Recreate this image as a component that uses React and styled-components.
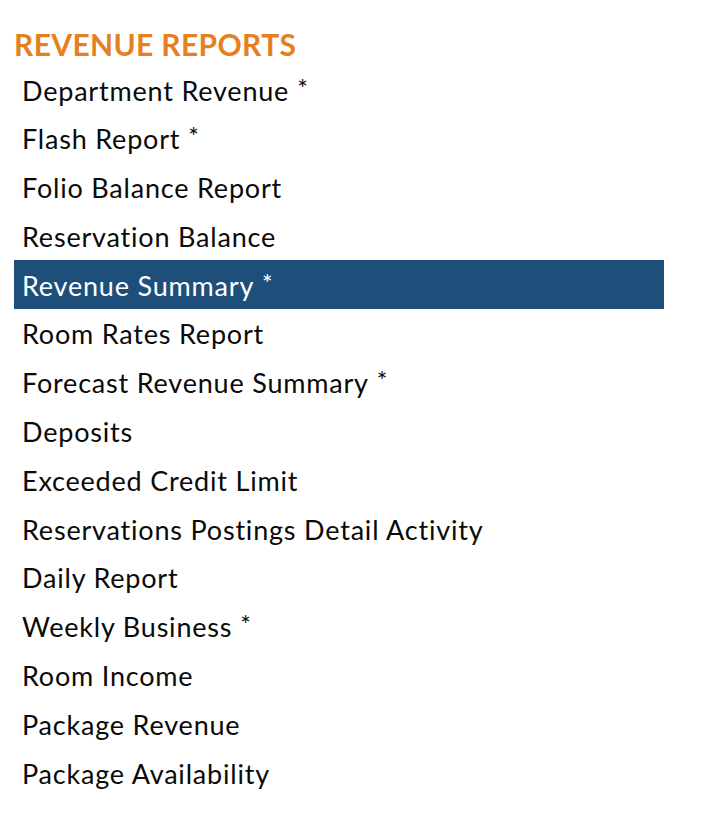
import React from 'react';
import styled, { createGlobalStyle } from 'styled-components';

const GlobalStyle = createGlobalStyle`
    body {
        margin: 0;
        background: #fff;
        font-family: Lato, "Open Sans", sans-serif;
    }
`;

const reports = [
    { name: 'Department Revenue', star: true },
    { name: 'Flash Report', star: true },
    { name: 'Folio Balance Report' },
    { name: 'Reservation Balance' },
    { name: 'Revenue Summary', star: true, active: true },
    { name: 'Room Rates Report' },
    { name: 'Forecast Revenue Summary', star: true },
    { name: 'Deposits' },
    { name: 'Exceeded Credit Limit' },
    { name: 'Reservations Postings Detail Activity' },
    { name: 'Daily Report' },
    { name: 'Weekly Business', star: true },
    { name: 'Room Income' },
    { name: 'Package Revenue' },
    { name: 'Package Availability' },
];

const App = () => {
    return (
        <>
            <GlobalStyle />
            <PanelStyled className='RevenueReports'>
                <Heading>Revenue Reports</Heading>
                <ReportList>
                    {reports.map((r) => (
                        <ReportItem key={r.name} $active={r.active}>
                            {r.name}
                            {r.star && <Star>*</Star>}
                        </ReportItem>
                    ))}
                </ReportList>
            </PanelStyled>
        </>
    );
};

export default App;

const PanelStyled = styled.div`
    width: 650px;
    padding: 24px 0 0 14px;
`;

const Heading = styled.h2`
    margin: 0;
    height: 41px;
    font-family: Lato, sans-serif;
    font-weight: 700;
    font-size: 30px;
    line-height: 41px;
    letter-spacing: 0.35px;
    text-transform: uppercase;
    font-variant-ligatures: none;
    color: #e57f1f;
`;

const ReportList = styled.ul`
    list-style: none;
    margin: 0;
    padding: 0;
`;

const ReportItem = styled.li`
    box-sizing: border-box;
    height: 48.8px;
    line-height: 48.8px;
    padding: 1.5px 0 0 8px;
    font-size: 27px;
    letter-spacing: 0.8px;
    font-variant-ligatures: none;
    white-space: nowrap;
    color: ${(p) => (p.$active ? '#ffffff' : '#0a0a0a')};
    background: ${(p) => (p.$active ? '#1d4f7a' : 'transparent')};
`;

const Star = styled.span`
    position: relative;
    top: -3px;
    margin-left: 8px;
    font-size: 25px;
    letter-spacing: 0;
`;
